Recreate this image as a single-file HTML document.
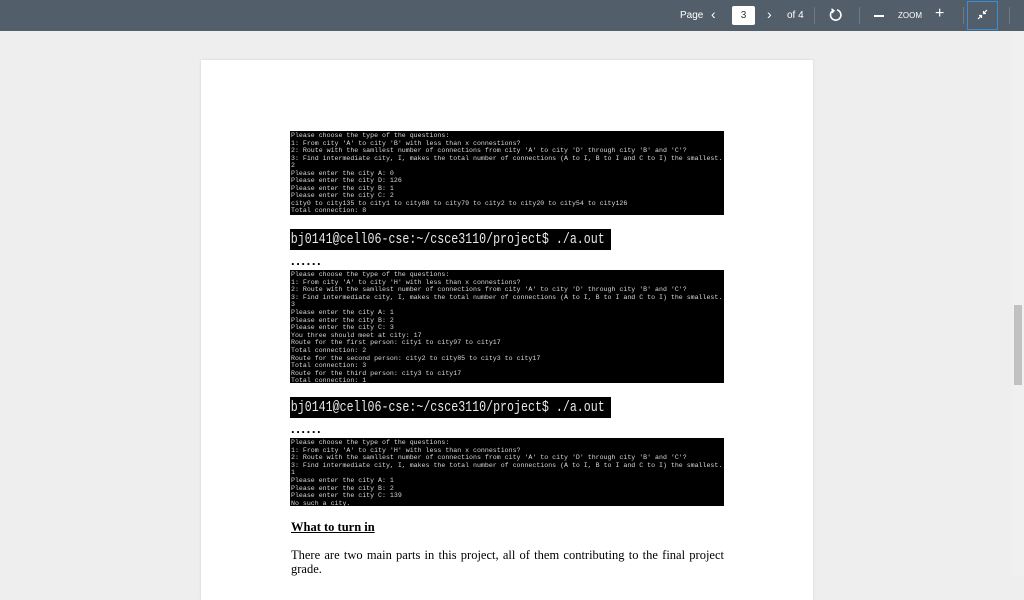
<!DOCTYPE html>
<html><head><meta charset="utf-8"><style>
*{margin:0;padding:0;box-sizing:border-box}
body{width:1024px;height:576px;overflow:hidden;background:#eeeeee;font-family:"Liberation Sans",sans-serif;position:relative}
.tb{position:absolute;left:0;top:0;width:1024px;height:31px;background:#525f6b;color:#fff;font-size:10px}
.tb span{position:absolute}
.page{position:absolute;left:201px;top:60px;width:612px;height:540px;background:#fff;box-shadow:0 0 2px #ccc}
.term{position:absolute;left:290px;width:434px;background:#000;color:#d8d8d8;font-family:"Liberation Mono",monospace;font-size:6.6px;line-height:7.6px;white-space:pre;padding:1px 0 0 1px;overflow:hidden}
.pr{position:absolute;left:290px;width:321px;height:21px;background:#000;overflow:hidden}
.pr span{display:inline-block;color:#e8e8e8;font-family:"Liberation Mono",monospace;font-size:15px;line-height:21px;white-space:pre;transform:scaleX(0.775);transform-origin:0 0;padding-left:1px}
.dots{position:absolute;left:291px;font-size:13px;font-weight:bold;color:#000;letter-spacing:1.6px}
.sb{position:absolute;left:1012px;top:31px;width:12px;height:545px;background:#f0f0f0}
</style></head><body>
<div class="tb">
<span style="left:680px;top:10px">Page</span>
<span style="left:711px;top:6px;font-size:14px">&#x2039;</span>
<div style="position:absolute;left:732px;top:6px;width:23px;height:19px;background:#fff;border-radius:2px;color:#333;text-align:center;line-height:19px">3</div>
<span style="left:767px;top:6px;font-size:14px">&#x203A;</span>
<span style="left:787px;top:10px">of 4</span>
<div style="position:absolute;left:814px;top:7px;width:1px;height:17px;background:#6d7984"></div>
<svg style="position:absolute;left:829px;top:8px" width="14" height="14" viewBox="0 0 14 14"><path d="M4 2.5A5.2 5.2 0 1 0 8 1.9" fill="none" stroke="#fff" stroke-width="1.6"/><path d="M2.5 0.8L5 2.7L3 5" fill="none" stroke="#fff" stroke-width="1.4"/></svg>
<div style="position:absolute;left:859px;top:7px;width:1px;height:17px;background:#6d7984"></div>
<div style="position:absolute;left:874px;top:15px;width:10px;height:1.5px;background:#fff"></div>
<span style="left:898px;top:11px;font-size:8px">ZOOM</span>
<span style="left:935px;top:5px;font-size:16px">+</span>
<div style="position:absolute;left:963px;top:7px;width:1px;height:17px;background:#6d7984"></div>
<div style="position:absolute;left:967px;top:1px;width:31px;height:29px;border:1px solid #3a8fd4"></div>
<svg style="position:absolute;left:977px;top:9px" width="11" height="11" viewBox="0 0 11 11"><path d="M1 10L4.5 6.5M2 6.5h2.5v2.5M10 1L6.5 4.5M6.5 2v2.5H9" fill="none" stroke="#fff" stroke-width="1.2"/></svg>
<div style="position:absolute;left:1009px;top:7px;width:1px;height:17px;background:#6d7984"></div>
</div>
<div class="sb"><div style="position:absolute;left:2px;top:274px;width:8px;height:80px;background:#c1c1c1"></div></div>
<div class="page"></div>
<div class="term" style="top:131px;height:84px;line-height:7.55px">Please choose the type of the questions:
1: From city 'A' to city 'B' with less than x connestions?
2: Route with the samllest number of connections from city 'A' to city 'D' through city 'B' and 'C'?
3: Find intermediate city, I, makes the total number of connections (A to I, B to I and C to I) the smallest.
2
Please enter the city A: 0
Please enter the city D: 126
Please enter the city B: 1
Please enter the city C: 2
city0 to city135 to city1 to city80 to city79 to city2 to city20 to city54 to city126
Total connection: 8</div>
<div class="pr" style="top:229px"><span>bj0141@cell06-cse:~/csce3110/project$ ./a.out</span></div>
<div class="dots" style="top:253px">......</div>
<div class="term" style="top:270px;height:113px">Please choose the type of the questions:
1: From city 'A' to city 'H' with less than x connestions?
2: Route with the samllest number of connections from city 'A' to city 'D' through city 'B' and 'C'?
3: Find intermediate city, I, makes the total number of connections (A to I, B to I and C to I) the smallest.
3
Please enter the city A: 1
Please enter the city B: 2
Please enter the city C: 3
You three should meet at city: 17
Route for the first person: city1 to city97 to city17
Total connection: 2
Route for the second person: city2 to city85 to city3 to city17
Total connection: 3
Route for the third person: city3 to city17
Total connection: 1</div>
<div class="pr" style="top:397px"><span>bj0141@cell06-cse:~/csce3110/project$ ./a.out</span></div>
<div class="dots" style="top:421px">......</div>
<div class="term" style="top:438px;height:68px">Please choose the type of the questions:
1: From city 'A' to city 'H' with less than x connestions?
2: Route with the samllest number of connections from city 'A' to city 'D' through city 'B' and 'C'?
3: Find intermediate city, I, makes the total number of connections (A to I, B to I and C to I) the smallest.
1
Please enter the city A: 1
Please enter the city B: 2
Please enter the city C: 139
No such a city.</div>
<div style="position:absolute;left:291px;top:520px;font-family:'Liberation Serif',serif;font-weight:bold;font-size:12.5px;text-decoration:underline">What to turn in</div>
<div style="position:absolute;left:291px;top:548px;width:433px;font-family:'Liberation Serif',serif;font-size:12.5px;line-height:14px;text-align:justify">There are two main parts in this project, all of them contributing to the final project grade.</div>
</body></html>
